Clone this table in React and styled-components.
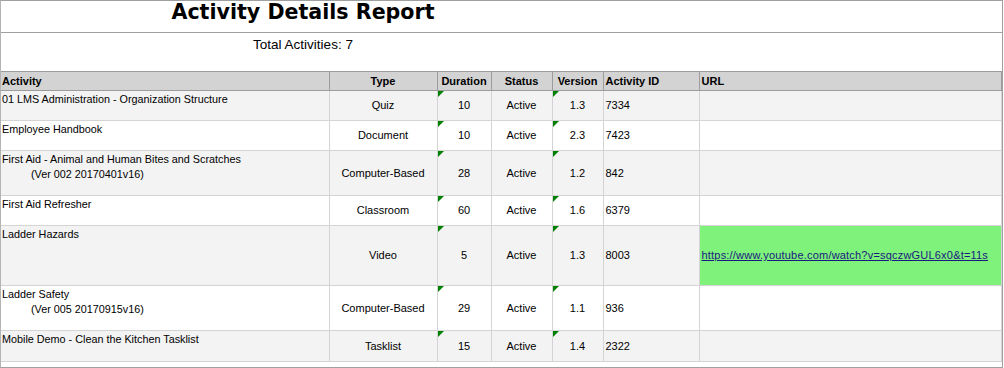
import React from "react";
import styled, { createGlobalStyle } from "styled-components";

const GlobalStyle = createGlobalStyle`
  html, body {
    margin: 0;
    padding: 0;
    background: #ffffff;
  }
  body {
    font-family: "Liberation Sans", Arial, sans-serif;
    color: #000;
  }
`;

const Frame = styled.div`
  width: 1001px;
  height: 366px;
  border: 1px solid #a0a0a0;
  border-left-color: #b4b4b4;
  background: #fff;
  overflow: hidden;
`;

const TitleBar = styled.div`
  height: 31px;
  border-bottom: 1px solid #a0a0a0;
  display: flex;
`;

const TitleCell = styled.div`
  width: 604px;
  display: flex;
  justify-content: center;
  align-items: flex-start;
`;

const Title = styled.h1`
  margin: 0;
  font-family: "DejaVu Sans", Verdana, sans-serif;
  font-weight: bold;
  font-size: 20.6px;
  line-height: 23px;
`;

const SummaryBar = styled.div`
  height: 38px;
  display: flex;
`;

const Summary = styled.div`
  width: 604px;
  text-align: center;
  font-size: 13.5px;
  padding-top: 4px;
`;

const Table = styled.table`
  border-collapse: collapse;
  table-layout: fixed;
  width: 1000px;
  font-size: 11px;
`;

const Head = styled.th`
  background: #d3d3d3;
  border: 1px solid #9c9c9c;
  height: 18px;
  padding: 0 2px;
  font-family: "Liberation Sans", Arial, sans-serif;
  font-size: 11px;
  font-weight: bold;
  text-align: ${(p) => p.$align || "left"};
  white-space: nowrap;
  &:first-child {
    border-left: none;
    padding-left: 1px;
  }
`;

const Row = styled.tr`
  background: ${(p) => (p.$shade ? "#f3f3f3" : "#ffffff")};
  height: ${(p) => p.$h}px;
`;

const Cell = styled.td`
  position: relative;
  border: 1px solid #d4d4d4;
  padding: 0 2px;
  line-height: 15px;
  text-align: ${(p) => p.$align || "left"};
  vertical-align: ${(p) => (p.$top ? "top" : "middle")};
  padding-top: ${(p) => (p.$top ? "1px" : "0")};
  background: ${(p) => (p.$hilite ? "#7ef27a" : "transparent")};
  &:first-child {
    border-left: none;
    padding-left: 1px;
    font-size: 10.8px;
  }
`;

const Marker = styled.span`
  position: absolute;
  top: 0;
  left: 0;
  width: 0;
  height: 0;
  border-top: 6px solid #008000;
  border-right: 6px solid transparent;
`;

const Sub = styled.div`
  padding-left: 29px;
`;

const Link = styled.a`
  color: #1a1a80;
  text-decoration: underline;
  letter-spacing: 0.2px;
  white-space: nowrap;
`;

const rows = [
  { name: "01 LMS Administration - Organization Structure", type: "Quiz", dur: 10, ver: "1.3", id: "7334", h: 30 },
  { name: "Employee Handbook", type: "Document", dur: 10, ver: "2.3", id: "7423", h: 30 },
  { name: "First Aid - Animal and Human Bites and Scratches", sub: "(Ver 002 20170401v16)", type: "Computer-Based", dur: 28, ver: "1.2", id: "842", h: 45 },
  { name: "First Aid Refresher", type: "Classroom", dur: 60, ver: "1.6", id: "6379", h: 30 },
  { name: "Ladder Hazards", type: "Video", dur: 5, ver: "1.3", id: "8003", h: 60, url: "https://www.youtube.com/watch?v=sqczwGUL6x0&t=11s" },
  { name: "Ladder Safety", sub: "(Ver 005 20170915v16)", type: "Computer-Based", dur: 29, ver: "1.1", id: "936", h: 45 },
  { name: "Mobile Demo - Clean the Kitchen Tasklist", type: "Tasklist", dur: 15, ver: "1.4", id: "2322", h: 31 },
];

export default function App() {
  return (
    <>
      <GlobalStyle />
      <Frame>
        <TitleBar>
          <TitleCell>
            <Title>Activity Details Report</Title>
          </TitleCell>
        </TitleBar>
        <SummaryBar>
          <Summary>Total Activities: 7</Summary>
        </SummaryBar>
        <Table>
          <colgroup>
            <col style={{ width: 328 }} />
            <col style={{ width: 108 }} />
            <col style={{ width: 54 }} />
            <col style={{ width: 61 }} />
            <col style={{ width: 51 }} />
            <col style={{ width: 96 }} />
            <col style={{ width: 302 }} />
          </colgroup>
          <thead>
            <tr>
              <Head>Activity</Head>
              <Head $align="center">Type</Head>
              <Head $align="center">Duration</Head>
              <Head $align="center">Status</Head>
              <Head $align="center">Version</Head>
              <Head>Activity ID</Head>
              <Head>URL</Head>
            </tr>
          </thead>
          <tbody>
            {rows.map((r, i) => (
              <Row key={r.id} $shade={i % 2 === 0} $h={r.h}>
                <Cell $top>
                  {r.name}
                  {r.sub && <Sub>{r.sub}</Sub>}
                </Cell>
                <Cell $align="center">{r.type}</Cell>
                <Cell $align="center">
                  <Marker />
                  {r.dur}
                </Cell>
                <Cell $align="center">Active</Cell>
                <Cell $align="center">
                  <Marker />
                  {r.ver}
                </Cell>
                <Cell>{r.id}</Cell>
                <Cell $hilite={!!r.url}>
                  {r.url && <Link href="#">{r.url}</Link>}
                </Cell>
              </Row>
            ))}
          </tbody>
        </Table>
      </Frame>
    </>
  );
}
